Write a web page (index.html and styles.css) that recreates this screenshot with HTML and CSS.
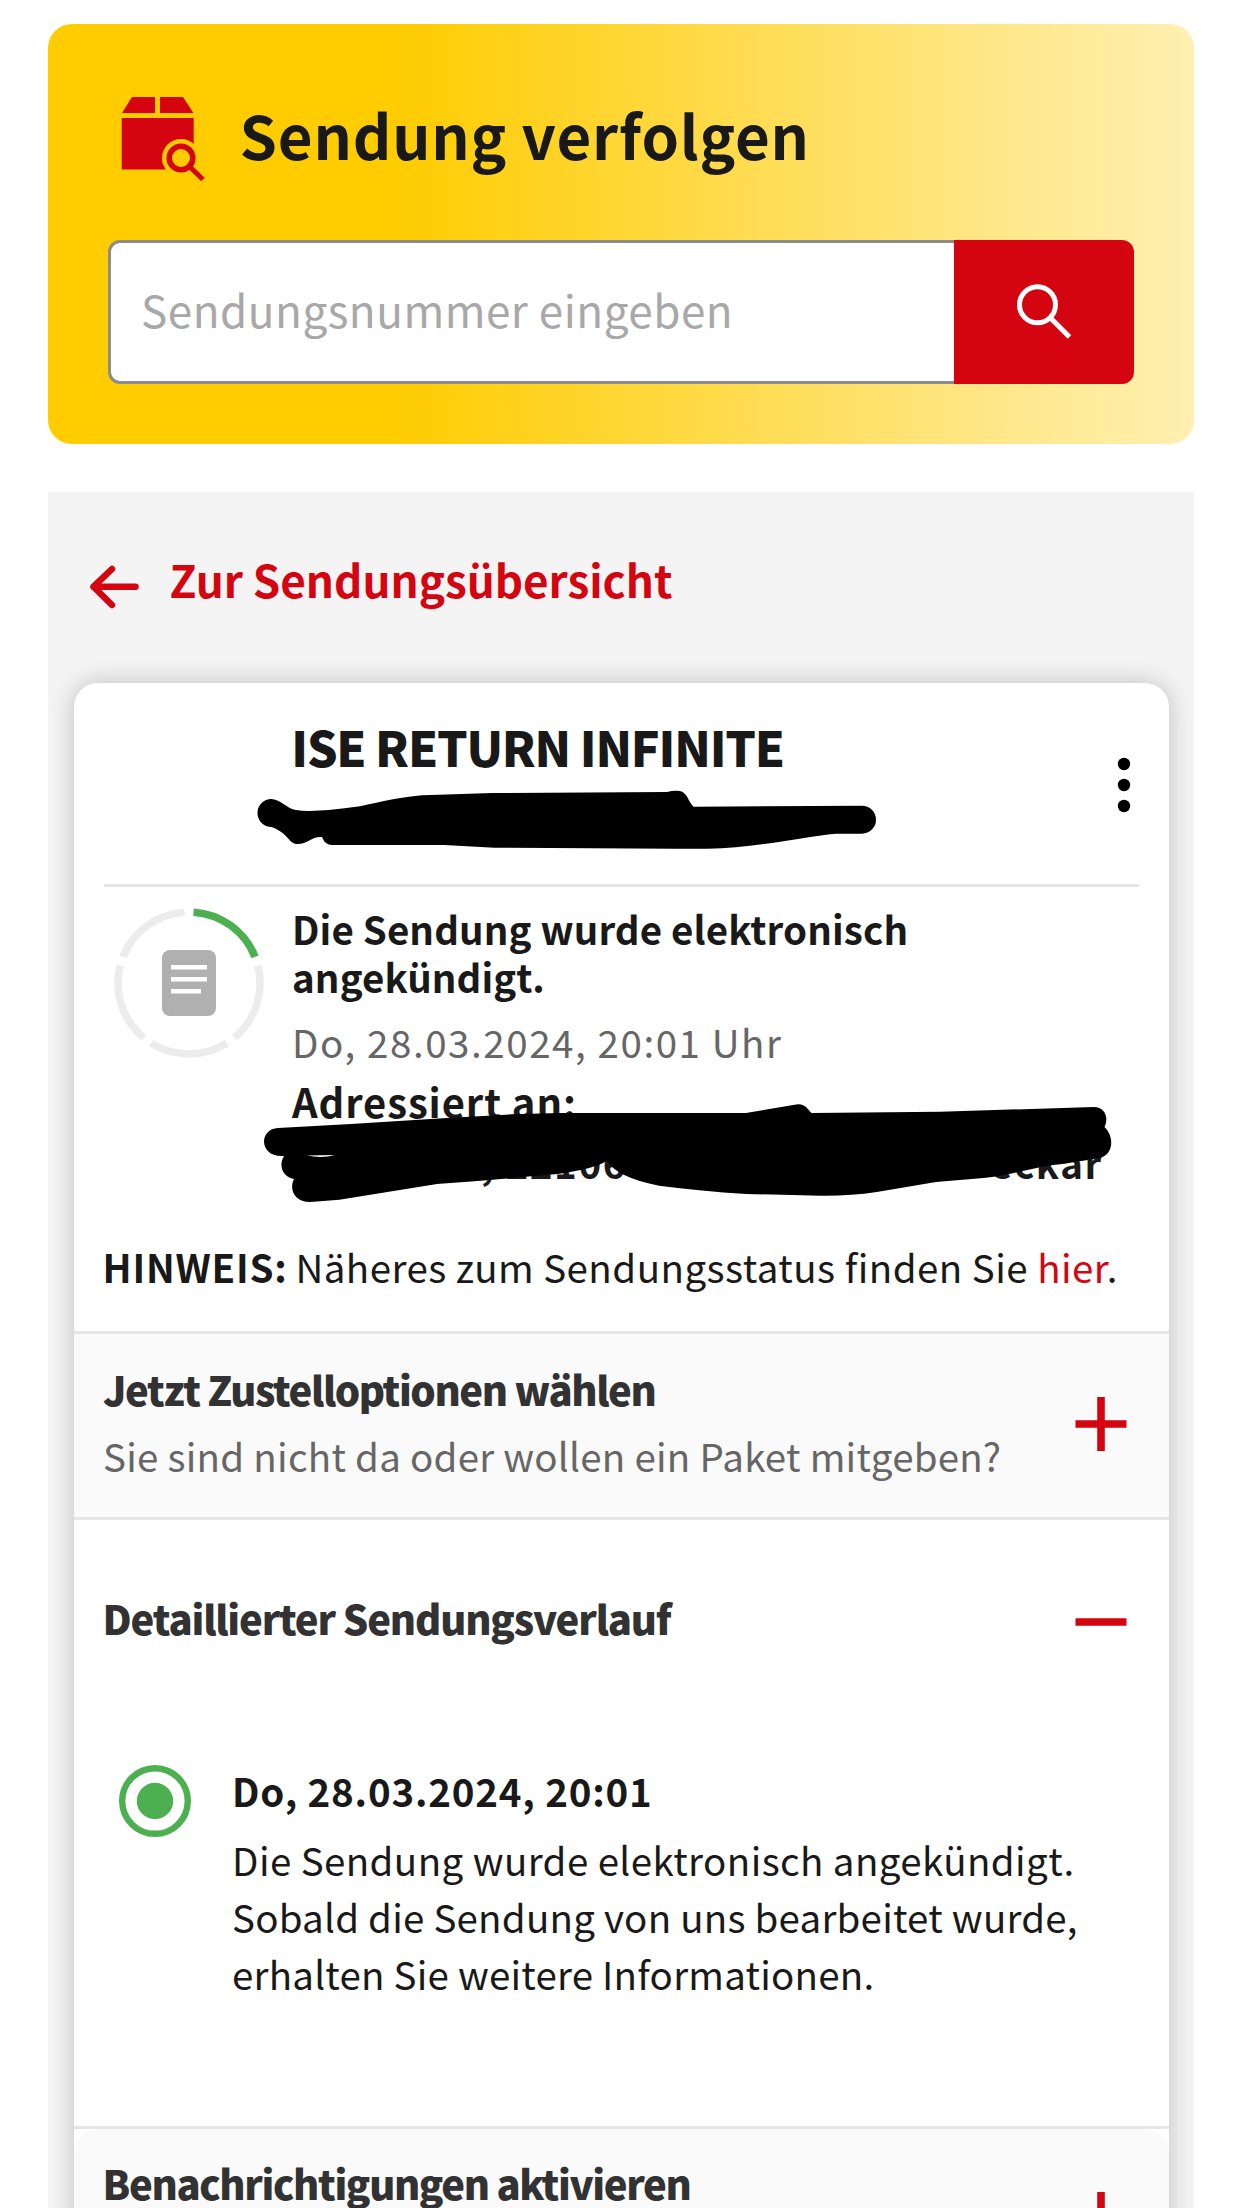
FILE: index.html
```html
<!DOCTYPE html>
<html lang="de">
<head>
<meta charset="utf-8">
<title>Sendung verfolgen</title>
<link rel="stylesheet" href="styles.css">
</head>
<body>
<main class="page">
  <section class="search-card">
    <div class="search-head">
      <svg class="parcel-icon" viewBox="0 0 120 92" aria-hidden="true">
        <path class="fill-red" d="M14 19 24 3h23v16zM52 3h23l10.500 16H52zM13.700 24h72v51.500h-72z"/>
        <circle class="parcel-gap" cx="73" cy="64" r="19"/>
        <circle class="parcel-lens" cx="73" cy="64" r="11.800"/>
        <path class="parcel-handle" d="m82 73 13 12.500"/>
      </svg>
      <h1 class="search-title">Sendung verfolgen</h1>
    </div>
    <form class="search-form">
      <input class="search-input" type="text" placeholder="Sendungsnummer eingeben">
      <button class="search-button" type="button" aria-label="Suchen">
        <svg class="search-icon" viewBox="0 0 56 56" aria-hidden="true">
          <circle cx="21.500" cy="20.700" r="18"/>
          <path d="m34 33.500 19.500 19.500"/>
        </svg>
      </button>
    </form>
  </section>

  <section class="panel">
    <a class="back-link">
      <svg class="back-icon" viewBox="0 0 50 44" aria-hidden="true"><path d="M22 4 3.500 21.700 22 40M3.500 21.700H45.500"/></svg>
      <span>Zur Sendungsübersicht</span>
    </a>

    <article class="card">
      <header class="card-head">
        <h2 class="card-title">ISE RETURN INFINITE</h2>
        <svg class="menu-icon" viewBox="0 0 20 60" aria-hidden="true">
          <circle cx="10" cy="8" r="6.200"/><circle cx="10" cy="29" r="6.200"/><circle cx="10" cy="50" r="6.200"/>
        </svg>
        <svg class="redaction redaction-number" viewBox="250 780 640 80" aria-hidden="true">
          <path d="M271.500 800C282 801 287 810 296 811Q313 814 360 807.300C380 803 408 796 431 796L492 794 667 793Q674 791 680 792C688 794 688 803 693.700 807.700L862 806.700A14 14 0 0 1 862 834.700H836C800 838 750 850 706 849.700H674.500L494.500 848.700 444 846H332Q325 846 322 838C312 837 308 845 297.600 845 288 845 290 835 271.500 828A14 14 0 0 1 271.500 800z"/>
        </svg>
      </header>

      <section class="status">
        <svg class="status-ring" viewBox="-76 -76 152 152" aria-hidden="true">
          <circle class="ring-rest" r="71" pathLength="360" transform="rotate(-86.300)"/>
          <circle class="ring-done" r="71" pathLength="360" transform="rotate(-86.300)"/>
          <rect class="doc" x="-27" y="-33" width="54" height="66" rx="8"/>
          <path class="doc-lines" d="M-18-15.700h36M-18-3.700h36M-18 8.300h30"/>
        </svg>
        <div class="status-text">
          <p class="status-title">Die Sendung wurde elektronisch<br>angekündigt.</p>
          <p class="status-date">Do, 28.03.2024, 20:01 Uhr</p>
          <p class="status-label">Adressiert an:</p>
          <p class="status-address"><span>, 22106</span><span>eckar</span></p>
        </div>
        <svg class="redaction redaction-address" viewBox="250 1095 870 120" aria-hidden="true">
          <path fill-rule="evenodd" d="M278 1129 351 1125 442.700 1119.300 511.600 1115.300 560 1114H746L797.700 1105.300C806 1105 808 1111 811.500 1114L940 1112.700 1094 1108C1105 1108 1109 1119 1104.500 1128 1115 1138 1113 1156 1100 1159L1062.600 1165C1035 1167 1010 1177 983.500 1179L936 1183 876.800 1193Q850 1197 821 1196.700L746 1195Q700 1192 659 1186.700 616 1178 607 1161.700 594 1170 557.500 1175L481 1181.700 437 1185 339.400 1200.700 310 1203C294 1203 289 1190 294 1180 283 1178 278 1167 284 1157 259 1159 258 1130 278 1129zM307 1156.500Q322 1159.500 335 1156z"/>
        </svg>
      </section>

      <p class="note"><strong>HINWEIS:</strong><span class="note-text">Näheres zum Sendungsstatus finden Sie</span> <a class="note-link">hier</a>.</p>

      <section class="row row-options">
        <div>
          <h3 class="row-title title-options">Jetzt Zustelloptionen wählen</h3>
          <p class="row-sub">Sie sind nicht da oder wollen ein Paket mitgeben?</p>
        </div>
        <svg class="toggle" viewBox="0 0 52 54" aria-hidden="true"><path d="M.500 27h51M26 0v54"/></svg>
      </section>

      <section class="row row-history">
        <h3 class="row-title title-history">Detaillierter Sendungsverlauf</h3>
        <svg class="toggle" viewBox="0 0 52 54" aria-hidden="true"><path d="M.500 27h51"/></svg>
      </section>
      <div class="event">
        <svg class="event-dot" viewBox="-36 -36 72 72" aria-hidden="true">
          <circle class="event-ring" r="32.800"/><circle class="event-core" r="18.200"/>
        </svg>
        <div>
          <p class="event-date">Do, 28.03.2024, 20:01</p>
          <p class="event-text"><span class="line-a">Die Sendung wurde elektronisch angekündigt.</span><span>Sobald die Sendung von uns bearbeitet wurde,</span><span>erhalten Sie weitere Informationen.</span></p>
        </div>
      </div>

      <div class="notify-wrap">
        <section class="row row-notify">
          <h3 class="row-title title-notify">Benachrichtigungen aktivieren</h3>
          <svg class="toggle" viewBox="0 0 52 54" aria-hidden="true"><path d="M.500 27h51M26 0v54"/></svg>
        </section>
      </div>
    </article>
  </section>
</main>
</body>
</html>
```
FILE: styles.css
```css
* {
  box-sizing: border-box;
}

html, body {
  margin: 0;
  height: 2208px;
  overflow: hidden;
  background: #fff;
}

body {
  font-family: "Noto Sans CJK JP", "Noto Sans", sans-serif;
  font-size: 38.5px;
  line-height: 48px;
  color: #191919;
  white-space: nowrap;
}

h1, h2, h3, p {
  margin: 0;
}

svg {
  display: block;
  flex: none;
}

.page {
  height: 2208px;
  padding: 24px 48px 0;
  display: flex;
  flex-direction: column;
  gap: 48px;
  overflow: hidden;
}

/* Search card */
.search-card {
  flex: none;
  height: 420px;
  padding: 70px 60px 0;
  border-radius: 24px;
  background: linear-gradient(90deg, #fc0 0, #fc0 30%, #ffe57f 79%, #fff0b2 100%);
}

.search-head {
  display: flex;
  height: 92px;
}

.parcel-icon {
  width: 120px;
  height: 92px;
}

.fill-red { fill: #d40511; }
.parcel-gap { fill: #fc0; }
.parcel-lens { fill: none; stroke: #d40511; stroke-width: 5.6; }
.parcel-handle { fill: none; stroke: #d40511; stroke-width: 5; }

.search-title {
  margin: 10px 0 0 11.6px;
  font-size: 60px;
  line-height: 60px;
  letter-spacing: .8px;
}

.search-form {
  display: flex;
  height: 144px;
  margin-top: 54px;
}

.search-input {
  width: 846px;
  height: 144px;
  padding: 0 20px 7px 30px;
  border: 3px solid #8c8c8c;
  border-right: 0;
  border-radius: 12px 0 0 12px;
  background: #fff;
  font: inherit;
  font-size: 44px;
  letter-spacing: .52px;
}

.search-input::placeholder {
  color: #a8a8a8;
  opacity: 1;
}

.search-button {
  width: 180px;
  padding: 0;
  display: flex;
  align-items: center;
  justify-content: center;
  border: 0;
  border-radius: 0 12px 12px 0;
  background: #d40511;
}

.search-icon {
  width: 56px;
  height: 56px;
  fill: none;
  stroke: #fff;
  stroke-width: 5;
}

/* Results panel */
.panel {
  flex: none;
  height: 1716px;
  padding: 57px 25px 0 26px;
  background: #f4f4f4;
  overflow: hidden;
}

.back-link {
  display: flex;
  gap: 29.5px;
  padding-left: 16px;
  font-size: 44px;
  font-weight: 700;
  line-height: 60px;
  color: #d40511;
}

.back-icon {
  width: 50px;
  height: 44px;
  margin-top: 16px;
  fill: none;
  stroke: #d40511;
  stroke-width: 6.5;
  stroke-linecap: round;
  stroke-linejoin: round;
}

.card {
  height: 1640px;
  margin-top: 74px;
  border-radius: 24px;
  background: #fff;
  box-shadow: 0 0 26px rgba(0, 0, 0, .22);
}

.card-head {
  position: relative;
  display: flex;
  justify-content: space-between;
  height: 204px;
  margin: 0 30px;
  padding: 33px 5px 0 187.3px;
  border-bottom: 3px solid #e6e6e6;
}

.card-title {
  font-size: 48px;
  font-weight: 900;
  line-height: 60px;
  letter-spacing: -1.22px;
}

.menu-icon {
  width: 20px;
  height: 60px;
  margin-top: 40px;
}

/* Marker strokes lie over the text they hide */
.redaction {
  position: absolute;
  fill: #000;
}

.redaction-number {
  left: 146px;
  top: 96px;
  width: 640px;
  height: 80px;
}

.redaction-address {
  left: 176px;
  top: 207px;
  width: 870px;
  height: 120px;
}

/* Current status */
.status {
  position: relative;
  display: flex;
  height: 355px;
  padding: 16.5px 0 0 39px;
}

.status-ring {
  width: 152px;
  height: 152px;
  margin-top: 3.500px;
}

.ring-rest, .ring-done {
  fill: none;
  stroke: #ececec;
  stroke-width: 7.5;
  stroke-dasharray: 64.6 7.4;
}

.ring-done {
  stroke: #4caf50;
  stroke-dasharray: 64.6 295.4;
}

.doc { fill: #b0b0b0; }
.doc-lines { fill: none; stroke: #fff; stroke-width: 4.6; }

.status-text {
  margin-left: 27px;
}

.status-title {
  font-weight: 700;
  letter-spacing: .11px;
}

.status-date {
  margin-top: 17.7px;
  letter-spacing: 1.57px;
  color: #666;
}

.status-label {
  margin-top: 12px;
  font-size: 40px;
  font-weight: 700;
  letter-spacing: .9px;
}

.status-address {
  display: flex;
  justify-content: space-between;
  width: 811px;
  margin-top: 12.600px;
  padding-left: 189px;
  font-weight: 700;
  letter-spacing: 1.6px;
}

.note {
  height: 89px;
  padding-left: 28.6px;
  letter-spacing: .46px;
}

.note strong {
  letter-spacing: .75px;
  margin-right: 8px;
}

.note-link {
  color: #d40511;
}

/* Accordion rows */
.row {
  display: flex;
  justify-content: space-between;
  padding-right: 42px;
  padding-left: 28.6px;
}

.row-title {
  font-size: 40px;
  font-weight: 900;
  line-height: 48px;
  color: #323232;
}

.toggle {
  width: 52px;
  height: 54px;
  fill: none;
  stroke: #d40511;
  stroke-width: 7.6;
}

.row-options {
  height: 189px;
  padding-top: 30.600px;
  padding-left: 29px;
  border-top: 3px solid #e6e6e6;
  border-bottom: 3px solid #e6e6e6;
  background: #fafafa;
}

.row-options .toggle {
  margin-top: 32.400px;
}

.title-options { letter-spacing: -1.4px; }
.title-history { letter-spacing: -1.18px; }
.title-notify { letter-spacing: -1.38px; }

.row-sub {
  margin-top: 18.600px;
  letter-spacing: .25px;
  color: #666;
}

.row-history {
  padding-top: 74px;
  height: 245px;
}

.row-history .toggle {
  margin-top: 1px;
}

.event {
  display: flex;
  gap: 41px;
  height: 361px;
  padding-left: 45px;
}

.event-dot {
  width: 72px;
  height: 72px;
}

.event-ring { fill: none; stroke: #4caf50; stroke-width: 6.4; }
.event-core { fill: #4caf50; }

.event-date {
  margin-top: .900px;
  font-weight: 700;
  letter-spacing: .8px;
}

.event-text {
  margin-top: 17px;
  line-height: 57.2px;
}

.event-text span {
  display: block;
  letter-spacing: .22px;
}

.event-text .line-a {
  letter-spacing: .4px;
}

.notify-wrap {
  border-top: 3px solid #e6e6e6;
}

.row-notify {
  height: 190px;
  padding-top: 29.600px;
  border-radius: 24px 24px 0 0;
  background: #fafafa;
}

.row-notify .toggle {
  margin-top: 33.400px;
}
```
